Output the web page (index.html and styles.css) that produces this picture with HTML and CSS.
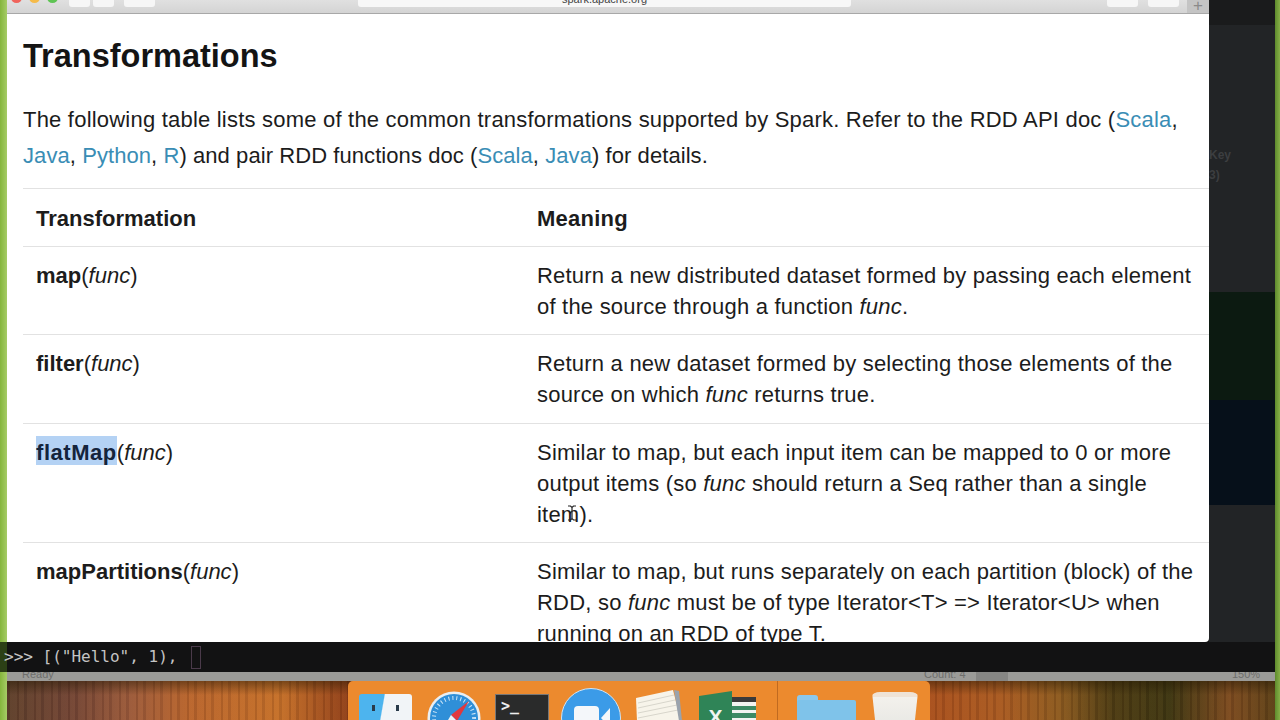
FILE: index.html
```html
<!DOCTYPE html>
<html lang="en">
<head>
    <meta charset="UTF-8">
    <title>Transformations</title>
    <link rel="stylesheet" href="styles.css">
</head>
<body>
    <div class="desktop">
        <div class="wallpaper"></div>

        <div class="dock">
            <div class="finder"><span class="eye"></span><span class="eye"></span></div>
            <svg class="safari" width="54" height="54" viewBox="0 0 54 54">
                <circle cx="27" cy="27" r="26.5" fill="#e9eef2"/>
                <circle cx="27" cy="27" r="24" fill="#2f8fd8"/>
                <circle cx="27" cy="27" r="20" fill="none" stroke="#cfe6f7" stroke-width="4" stroke-dasharray="1 3"/>
                <polygon points="42,10 30,30 24,24" fill="#e0383e"/>
                <polygon points="12,44 30,30 24,24" fill="#eef2f5"/>
            </svg>
            <div class="terminal-icon">&gt;_</div>
            <div class="zoom-icon"><span class="cam"></span><span class="lens"></span></div>
            <svg class="notes" width="48" height="31" viewBox="0 0 48 31">
                <polygon points="1,8 38,0 46,31 2,31" fill="#f7f4ea"/>
                <path d="M3 13L39 5M3 18L40 10M3 23L42 15M3 28L43 20" stroke="#d8d6cc" stroke-width="1"/>
                <polygon points="39,0 44,1 47,31 44,31" fill="#9aa3ad"/>
            </svg>
            <div class="excel">
                <div class="excel-sheet"></div>
                <div class="excel-cover">X</div>
            </div>
            <div class="dock-divider"></div>
            <div class="folder"><span class="folder-tab"></span><span class="folder-body"></span></div>
            <div class="trash"></div>
        </div>

        <div class="statusbar">
            <span class="status-ready">Ready</span>
            <span class="status-count">Count: 4</span>
            <span class="status-btn"></span>
            <span class="status-zoom">150%</span>
        </div>

        <div class="edge left-edge"></div>
        <div class="edge right-edge"></div>

        <div class="console">
            <span>&gt;&gt;&gt; [("Hello", 1), </span><span class="console-cursor"></span>
        </div>

        <div class="sidepanel">
            <div class="side-tabs"></div>
            <div class="side-key">Key<br>3)</div>
            <div class="side-green"></div>
            <div class="side-blue"></div>
        </div>

        <div class="browser">
            <div class="toolbar">
                <span class="light red"></span>
                <span class="light yellow"></span>
                <span class="light green"></span>
                <span class="tool-btn nav"></span>
                <span class="tool-btn nav second"></span>
                <span class="tool-btn side"></span>
                <div class="address"><span class="address-text">spark.apache.org</span></div>
                <span class="tool-btn action"></span>
                <span class="tool-btn action"></span>
                <span class="new-tab">+</span>
            </div>
            <div class="page">
                <h1>Transformations</h1>
                <p class="intro">The following table lists some of the common transformations supported by Spark. Refer to the RDD API doc (<a>Scala</a>,<br><span class="intro-second"><a>Java</a>, <a>Python</a>, <a>R</a>) and pair RDD functions doc (<a>Scala</a>, <a>Java</a>) for details.</span></p>
                <table>
                    <tr class="head">
                        <th>Transformation</th>
                        <th>Meaning</th>
                    </tr>
                    <tr>
                        <td><b>map</b>(<i>func</i>)</td>
                        <td>Return a new distributed dataset formed by passing each element of the source through a function <i>func</i>.</td>
                    </tr>
                    <tr>
                        <td><b>filter</b>(<i>func</i>)</td>
                        <td>Return a new dataset formed by selecting those elements of the source on which <i>func</i> returns true.</td>
                    </tr>
                    <tr>
                        <td><b class="selected">flatMap</b>(<i>func</i>)</td>
                        <td>Similar to map, but each input item can be mapped to 0 or more output items (so <i>func</i> should return a Seq rather than a single <span class="cursor-word">item<svg class="ibeam" width="10" height="16" viewBox="0 0 10 16"><path d="M1 1h2.5L5 2.5 6.5 1H9M5 2.5v11M1 15h2.5L5 13.5 6.5 15H9" fill="none" stroke="#222" stroke-width="1.2"/></svg></span>).</td>
                    </tr>
                    <tr>
                        <td><b>mapPartitions</b>(<i>func</i>)</td>
                        <td>Similar to map, but runs separately on each partition (block) of the RDD, so <i>func</i> must be of type Iterator&lt;T&gt; =&gt; Iterator&lt;U&gt; when running on an RDD of type T.</td>
                    </tr>
                </table>
            </div>
        </div>
    </div>
</body>
</html>
```

FILE: styles.css
```css
html, body {
    margin: 0;
    padding: 0;
    height: 100%;
    overflow: hidden;
    background: #111;
}
.desktop {
    position: relative;
    width: 1280px;
    height: 720px;
    overflow: hidden;
    font-family: "Liberation Sans", Arial, sans-serif;
}

/* wallpaper + dock */
.wallpaper {
    position: absolute;
    left: 0;
    right: 0;
    top: 681px;
    bottom: 0;
    background:
        linear-gradient(rgba(30, 20, 0, .45), rgba(30, 20, 0, 0) 14px),
        repeating-linear-gradient(90deg, rgba(60, 20, 0, .13) 0 2px, rgba(255, 170, 90, .05) 2px 7px, rgba(40, 10, 0, .1) 7px 10px, rgba(255, 170, 90, .04) 10px 17px),
        linear-gradient(90deg, #5a3f2c 0, #6f4436 70px, #9a5a3c 130px, #b8652e 190px, #c4702a 280px, #8e3f1a 348px, #a8501e 930px, #a85a22 1000px, #8a5a20 1060px, #4c3c14 1110px, #3a3512 1170px, #7a4a20 1230px, #5a4018 1275px);
}
.dock {
    position: absolute;
    left: 348px;
    top: 681px;
    width: 582px;
    height: 39px;
    background: #ec8a2e;
    border-radius: 5px 5px 0 0;
    overflow: hidden;
}
.dock > * {
    position: absolute;
}
.finder {
    left: 11px;
    top: 13px;
    width: 53px;
    height: 40px;
    border-radius: 3px;
    background: linear-gradient(100deg, #4db4ee 0 42%, #f1f4f7 44%);
    display: flex;
    gap: 21px;
    padding: 11px 0 0 13px;
    box-sizing: border-box;
}
.eye {
    width: 3px;
    height: 6px;
    background: #2a3a4a;
}
.safari {
    left: 79px;
    top: 10px;
}
.terminal-icon {
    left: 147px;
    top: 13px;
    width: 54px;
    height: 40px;
    background: #2a2b2b;
    border: 1px solid #777;
    box-sizing: border-box;
    color: #eee;
    font: bold 15px/22px "DejaVu Sans Mono", monospace;
    padding-left: 5px;
}
.zoom-icon {
    left: 213px;
    top: 7px;
    width: 60px;
    height: 60px;
    border-radius: 50%;
    background: #3b9be8;
    border: 1px solid #cfe4f4;
    box-sizing: border-box;
}
.cam {
    position: absolute;
    left: 12px;
    top: 17px;
    width: 25px;
    height: 24px;
    border-radius: 4px;
    background: #f4f7fa;
}
.lens {
    position: absolute;
    left: 39px;
    top: 19px;
    width: 0;
    height: 0;
    border-top: 10px solid transparent;
    border-bottom: 10px solid transparent;
    border-right: 9px solid #f4f7fa;
}
.notes {
    left: 287px;
    top: 9px;
}
.excel {
    left: 351px;
    top: 10px;
    width: 57px;
    height: 40px;
}
.excel-sheet {
    position: absolute;
    left: 28px;
    top: 6px;
    width: 29px;
    height: 34px;
    background:
        linear-gradient(#3a3a3a 0 5px, transparent 5px 9px, #3c8a64 9px 13px, transparent 13px 16px, #3c8a64 16px 21px, transparent 21px 24px, #6aa888 24px 34px),
        #f1f3f0;
    border-left: 5px solid #f1f3f0;
    box-sizing: border-box;
}
.excel-cover {
    position: absolute;
    left: 0;
    top: 0;
    width: 33px;
    height: 40px;
    background: #2f8457;
    clip-path: polygon(0 5px, 100% 0, 100% 100%, 0 100%);
    color: #f1f5f1;
    font: bold 21px/52px "Liberation Sans", sans-serif;
    text-align: center;
}
.dock-divider {
    left: 429px;
    top: 0;
    width: 1px;
    height: 39px;
    background: #c06a20;
}
.folder {
    left: 449px;
    top: 14px;
    width: 59px;
    height: 30px;
}
.folder-tab {
    position: absolute;
    left: 0;
    top: 0;
    width: 21px;
    height: 8px;
    border-radius: 3px 3px 0 0;
    background: #8cc8ec;
}
.folder-body {
    position: absolute;
    left: 0;
    top: 5px;
    width: 59px;
    height: 26px;
    background: #7fc3ea;
    border-radius: 2px;
}
.trash {
    left: 524px;
    top: 11px;
    width: 46px;
    height: 34px;
    background: linear-gradient(#efe3d6 0 5px, #f3f1ec 5px, #e8e8e4);
    border-radius: 8px 8px 0 0 / 4px 4px 0 0;
    clip-path: polygon(0 0, 100% 0, 92% 100%, 8% 100%);
}

/* excel status bar peeking out under the console */
.statusbar {
    position: absolute;
    left: 0;
    right: 0;
    top: 666px;
    height: 15px;
    background: #9b9b98;
    color: #6e6e6c;
    font-size: 11px;
    line-height: 14px;
}
.statusbar span {
    position: absolute;
    top: 1px;
}
.status-ready {
    left: 22px;
}
.status-count {
    left: 924px;
}
.statusbar .status-btn {
    left: 976px;
    top: 0;
    width: 32px;
    height: 15px;
    background: #868684;
}
.status-zoom {
    left: 1232px;
}

/* python console */
.console {
    position: absolute;
    left: 0;
    right: 5px;
    top: 642px;
    height: 30px;
    background: linear-gradient(90deg, #2c4016 0 7px, #121213 7px);
    color: #c4c4c4;
    font: 16px/30px "DejaVu Sans Mono", monospace;
    white-space: pre;
    padding-left: 4px;
    display: flex;
    align-items: center;
}
.console-cursor {
    width: 8px;
    height: 21px;
    border: 1px solid #4a3a4a;
    margin-left: 4px;
}

/* window behind the browser on the right */
.sidepanel {
    position: absolute;
    left: 1209px;
    width: 66px;
    top: 0;
    height: 642px;
    background: #222426;
    display: flex;
    flex-direction: column;
    overflow: hidden;
}
.side-tabs {
    height: 25px;
    background: #1a1b1c;
}
.side-key {
    height: 267px;
    box-sizing: border-box;
    padding-top: 120px;
    color: #3c3e40;
    font-size: 12px;
    font-weight: bold;
    line-height: 20px;
}
.side-green {
    height: 108px;
    background: #0c1a11;
}
.side-blue {
    height: 105px;
    background: #06101a;
}

/* browser window */
.browser {
    position: absolute;
    left: 7px;
    top: 0;
    width: 1202px;
    height: 642px;
    background: #fff;
    border-radius: 0 0 4px 0;
    overflow: hidden;
    display: flex;
    flex-direction: column;
}
.toolbar {
    flex: none;
    position: relative;
    height: 13px;
    background: linear-gradient(#e0e0e0, #d4d4d4);
    border-bottom: 1px solid #a8a8a8;
    overflow: hidden;
}
.toolbar > * {
    position: absolute;
}
.light {
    top: -8px;
    width: 11px;
    height: 11px;
    border-radius: 50%;
}
.red {
    left: 4px;
    background: #f0645c;
}
.yellow {
    left: 22px;
    background: #f5bb4a;
}
.green {
    left: 40px;
    background: #5fc454;
}
.tool-btn {
    top: -6px;
    height: 13px;
    width: 31px;
    background: #f6f6f6;
    border-radius: 3px;
}
.nav {
    left: 62px;
    width: 21px;
}
.nav.second {
    left: 86px;
}
.side {
    left: 117px;
}
.address {
    left: 351px;
    top: -6px;
    width: 493px;
    height: 13px;
    background: #f7f7f7;
    border-radius: 3px;
    text-align: center;
}
.address-text {
    position: relative;
    top: -5px;
    left: 0;
    color: #444;
    font-size: 11px;
    line-height: 13px;
}
.action {
    left: 1100px;
}
.action + .action {
    left: 1141px;
}
.new-tab {
    left: 1180px;
    top: -2px;
    width: 22px;
    height: 15px;
    background: #c4c4c4;
    color: #8a8a8a;
    font-size: 17px;
    line-height: 15px;
    text-align: center;
}
.page {
    flex: 1;
    padding-left: 16px;
    color: #1c1c1c;
    font-size: 22px;
}
h1 {
    margin: 23px 0 0;
    font-size: 32.5px;
    line-height: 38px;
    color: #141414;
}
.intro {
    margin: 27px 0 0;
    line-height: 36px;
    width: 1180px;
    letter-spacing: .21px;
}
.intro-second {
    letter-spacing: .07px;
}
a {
    color: #3a8db5;
}
table {
    border-collapse: collapse;
    margin-top: 14px;
    width: 1186px;
    table-layout: fixed;
}
tr {
    border-top: 1px solid #e2e2e2;
}
th, td {
    padding: 14px 13px 12px;
    line-height: 30.8px;
    text-align: left;
    vertical-align: top;
}
th {
    padding: 15px 13px 11px;
}
th:first-child, td:first-child {
    width: 475px;
}
th:last-child {
    letter-spacing: .25px;
}
td:last-child {
    padding-right: 10px;
    letter-spacing: .21px;
}
.selected {
    background: #b4d2f4;
    color: #14243c;
    letter-spacing: .55px;
    padding-top: 4px;
}
.cursor-word {
    position: relative;
}
.ibeam {
    position: absolute;
    left: 30px;
    top: 3px;
}

/* slivers of the green desktop at the screen edges */
.edge {
    position: absolute;
    top: 0;
    bottom: 0;
}
.left-edge {
    left: 0;
    width: 7px;
    background: linear-gradient(90deg, #84b53c, #a6cc66);
}
.right-edge {
    right: 0;
    width: 5px;
    background: linear-gradient(90deg, #5e8a2c, #86b048);
}
```
